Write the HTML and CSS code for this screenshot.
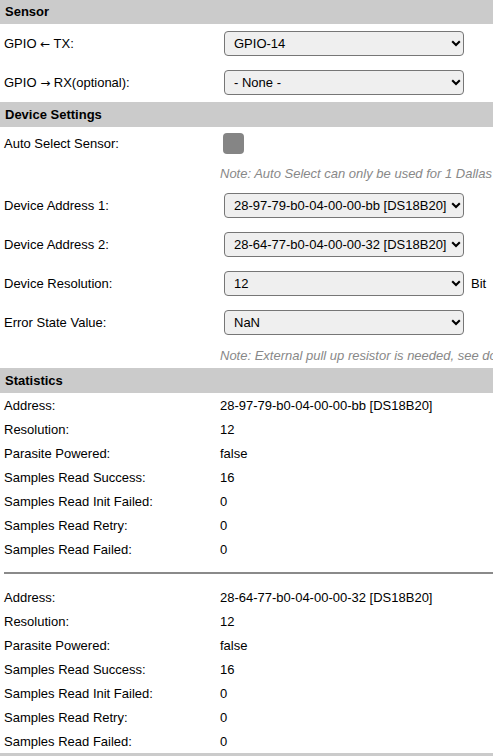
FILE: index.html
```html
<!DOCTYPE html>
<html lang="en">
<head>
    <meta charset="UTF-8">
    <meta name="viewport" content="width=device-width, initial-scale=1.0">
    <title>Devices - Environment - DS18b20</title>
    <link rel="stylesheet" href="styles.css">
</head>
<body>
    <table class="normal">
        <colgroup>
            <col class="c-label">
            <col>
        </colgroup>
        <tr class="sect"><th colspan="2">Sensor</th></tr>
        <tr class="field">
            <td>GPIO <span class="arrow">&larr;</span> TX:</td>
            <td>
                <span class="sel">
                    <select id="taskdevicepin1"><option>GPIO-14</option></select>
                    <svg class="chev" width="10" height="7" viewBox="0 0 10 7"><path d="M1.2 1.3 L5 5 L8.8 1.3" fill="none" stroke="#000" stroke-width="2.1"/></svg>
                </span>
            </td>
        </tr>
        <tr class="field">
            <td>GPIO <span class="arrow">&rarr;</span> RX(optional):</td>
            <td>
                <span class="sel">
                    <select id="taskdevicepin2"><option>- None -</option></select>
                    <svg class="chev" width="10" height="7" viewBox="0 0 10 7"><path d="M1.2 1.3 L5 5 L8.8 1.3" fill="none" stroke="#000" stroke-width="2.1"/></svg>
                </span>
            </td>
        </tr>

        <tr class="sect"><th colspan="2">Device Settings</th></tr>
        <tr class="check">
            <td>Auto Select Sensor:</td>
            <td><span class="checkmark"></span></td>
        </tr>
        <tr class="note">
            <td></td>
            <td>Note: Auto Select can only be used for 1 Dallas sensor per GPIO pin.</td>
        </tr>
        <tr class="field">
            <td>Device Address 1:</td>
            <td>
                <span class="sel">
                    <select id="dev1"><option>28-97-79-b0-04-00-00-bb [DS18B20]</option></select>
                    <svg class="chev" width="10" height="7" viewBox="0 0 10 7"><path d="M1.2 1.3 L5 5 L8.8 1.3" fill="none" stroke="#000" stroke-width="2.1"/></svg>
                </span>
            </td>
        </tr>
        <tr class="field">
            <td>Device Address 2:</td>
            <td>
                <span class="sel">
                    <select id="dev2"><option>28-64-77-b0-04-00-00-32 [DS18B20]</option></select>
                    <svg class="chev" width="10" height="7" viewBox="0 0 10 7"><path d="M1.2 1.3 L5 5 L8.8 1.3" fill="none" stroke="#000" stroke-width="2.1"/></svg>
                </span>
            </td>
        </tr>
        <tr class="field">
            <td>Device Resolution:</td>
            <td>
                <span class="sel">
                    <select id="res"><option>12</option></select>
                    <svg class="chev" width="10" height="7" viewBox="0 0 10 7"><path d="M1.2 1.3 L5 5 L8.8 1.3" fill="none" stroke="#000" stroke-width="2.1"/></svg>
                </span><span class="unit">Bit</span>
            </td>
        </tr>
        <tr class="field">
            <td>Error State Value:</td>
            <td>
                <span class="sel">
                    <select id="err"><option>NaN</option></select>
                    <svg class="chev" width="10" height="7" viewBox="0 0 10 7"><path d="M1.2 1.3 L5 5 L8.8 1.3" fill="none" stroke="#000" stroke-width="2.1"/></svg>
                </span>
            </td>
        </tr>
        <tr class="note">
            <td></td>
            <td>Note: External pull up resistor is needed, see docs!</td>
        </tr>

        <tr class="sect"><th colspan="2">Statistics</th></tr>
        <tr class="stat"><td>Address:</td><td>28-97-79-b0-04-00-00-bb [DS18B20]</td></tr>
        <tr class="stat"><td>Resolution:</td><td>12</td></tr>
        <tr class="stat"><td>Parasite Powered:</td><td>false</td></tr>
        <tr class="stat"><td>Samples Read Success:</td><td>16</td></tr>
        <tr class="stat"><td>Samples Read Init Failed:</td><td>0</td></tr>
        <tr class="stat"><td>Samples Read Retry:</td><td>0</td></tr>
        <tr class="stat"><td>Samples Read Failed:</td><td>0</td></tr>
        <tr class="sep"><td colspan="2"><div class="line"></div></td></tr>
        <tr class="stat"><td>Address:</td><td>28-64-77-b0-04-00-00-32 [DS18B20]</td></tr>
        <tr class="stat"><td>Resolution:</td><td>12</td></tr>
        <tr class="stat"><td>Parasite Powered:</td><td>false</td></tr>
        <tr class="stat"><td>Samples Read Success:</td><td>16</td></tr>
        <tr class="stat"><td>Samples Read Init Failed:</td><td>0</td></tr>
        <tr class="stat"><td>Samples Read Retry:</td><td>0</td></tr>
        <tr class="stat"><td>Samples Read Failed:</td><td>0</td></tr>

        <tr class="sect"><th colspan="2"></th></tr>
    </table>
</body>
</html>
```

FILE: styles.css
```css
html, body {
    overflow: hidden;
}
body {
    font-family: "Liberation Sans", Arial, sans-serif;
    font-size: 13px;
    color: #000;
    background: #fff;
    margin: 0;
}
table.normal {
    border-collapse: collapse;
    border-spacing: 0;
    table-layout: fixed;
    width: 100%;
    margin-top: -1px;
}
.c-label {
    width: 216px;
}
th, td {
    padding: 0 4px;
    text-align: left;
    vertical-align: middle;
    white-space: nowrap;
}
.sect th {
    height: 25px;
    padding: 0 5px;
    background-color: #cbcbcb;
    font-weight: bold;
}
.arrow {
    font-family: "DejaVu Sans", sans-serif;
    font-size: 12px;
}
.field td {
    height: 39px;
}
.check td {
    height: 33px;
}
.note td {
    height: 26px;
    color: #888;
    font-style: italic;
}
.stat td {
    height: 24px;
}
.sep td {
    height: 24px;
    padding-right: 0;
}
.line {
    height: 2px;
    background-color: #8a8a8a;
}
.sel {
    position: relative;
    display: inline-block;
    vertical-align: middle;
    margin-left: 4px;
}
select {
    -webkit-appearance: none;
    appearance: none;
    display: block;
    width: 240px;
    height: 25px;
    margin: 0;
    padding: 0 0 0 9px;
    border: 1px solid #767676;
    border-radius: 4px;
    background-color: #efefef;
    color: #000;
    font-family: "Liberation Sans", Arial, sans-serif;
    font-size: 13px;
}
.chev {
    position: absolute;
    right: 3px;
    top: 9px;
    pointer-events: none;
}
.unit {
    margin-left: 7px;
    vertical-align: middle;
}
.checkmark {
    display: inline-block;
    vertical-align: middle;
    width: 21px;
    height: 21px;
    margin-left: 3px;
    border-radius: 4px;
    background-color: #858585;
}
```
